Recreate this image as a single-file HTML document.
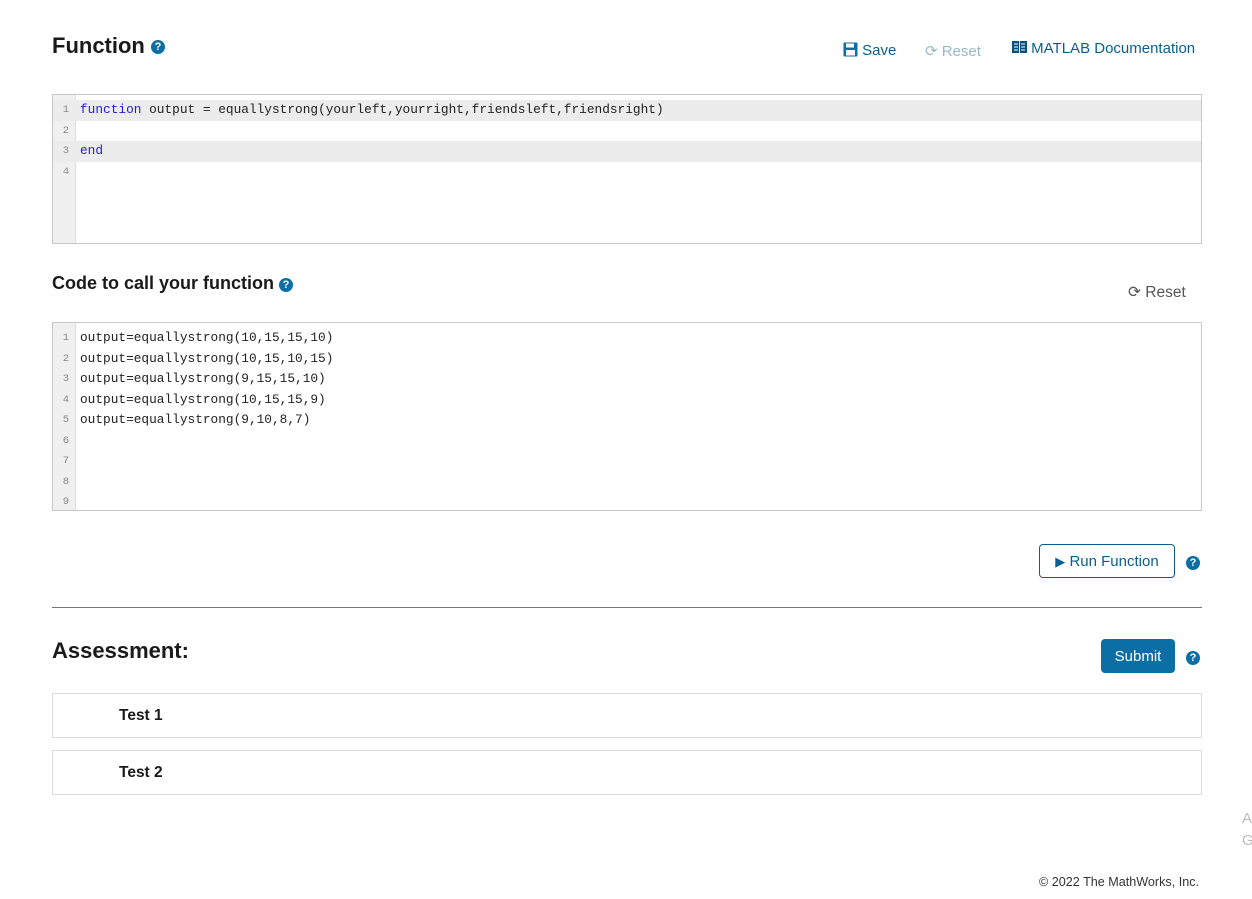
<!DOCTYPE html>
<html><head><style>
body{margin:0;background:#fff;font-family:"Liberation Sans",Arial,sans-serif;color:#1a1a1a;width:1252px;height:899px;position:relative;overflow:hidden}
.a{position:absolute}
.q{display:inline-block;width:14px;height:14px;border-radius:50%;background:#0b6fa5;color:#fff;font-size:11px;font-weight:bold;text-align:center;line-height:14px}
.ed{position:absolute;left:52px;width:1148px;border:1px solid #c8c8c8;background:#fff}
.gut{position:absolute;left:0;top:0;bottom:0;width:22px;background:#f0f0f0;border-right:1px solid #ddd}
.ln{position:absolute;left:0;width:1148px;height:20.5px;font-family:"Liberation Mono",monospace;font-size:12.8px;line-height:20.5px}
.ln .n{position:absolute;left:0;width:16px;text-align:right;color:#888;font-size:10.5px}
.ln .c{position:absolute;left:27px;white-space:pre;color:#222}
.hl{background:#ececec}
.ln .kw,.kw{color:#1f1fd0}
.test{position:absolute;left:52px;width:1148px;height:43px;border:1px solid #dcdcdc;font-weight:bold;font-size:15.5px;line-height:43px}
.test span{position:absolute;left:66px}
</style></head><body>
<div class="a" style="left:52px;top:33px;font-size:22px;font-weight:bold">Function <span class="q" style="vertical-align:3px">?</span></div>
<div class="a" style="left:843px;top:42px;font-size:15px;color:#0b5f8f"><svg width="15" height="15" viewBox="0 0 15 15" style="vertical-align:-2px"><rect x="0.5" y="0.5" width="14" height="14" rx="1" fill="#0b6fa5"/><rect x="3" y="1.5" width="8" height="4" fill="#fff"/><rect x="3" y="8" width="9" height="5.5" fill="#fff"/></svg> Save</div>
<div class="a" style="left:925px;top:42px;font-size:15px;color:#9ab8c8">⟳ Reset</div>
<div class="a" style="left:1012px;top:40px;font-size:15px;color:#0b5f8f"><svg width="15" height="12" viewBox="0 0 15 12" style="vertical-align:0px"><rect x="0" y="0" width="15" height="12" fill="#0b4f7f"/><line x1="7.5" y1="0" x2="7.5" y2="12" stroke="#fff"/><path d="M2 3h4M2 6h4M2 9h4M9 3h4M9 6h4M9 9h4" stroke="#fff"/></svg> MATLAB Documentation</div>

<div class="ed" style="top:94px;height:148px"><div class="gut"></div>
<div class="ln hl" style="top:5px"><span class="n">1</span><span class="c"><span class="kw">function</span> output = equallystrong(yourleft,yourright,friendsleft,friendsright)</span></div>
<div class="ln" style="top:25.5px"><span class="n">2</span></div>
<div class="ln hl" style="top:46px"><span class="n">3</span><span class="c kw">end</span></div>
<div class="ln" style="top:66.5px"><span class="n">4</span></div>
</div>

<div class="a" style="left:52px;top:273px;font-size:18px;font-weight:bold">Code to call your function <span class="q" style="vertical-align:1px">?</span></div>
<div class="a" style="left:1128px;top:283px;font-size:15.5px;color:#555">⟳ Reset</div>

<div class="ed" style="top:322px;height:187px"><div class="gut"></div>
<div class="ln" style="top:5px"><span class="n">1</span><span class="c">output=equallystrong(10,15,15,10)</span></div>
<div class="ln" style="top:25.5px"><span class="n">2</span><span class="c">output=equallystrong(10,15,10,15)</span></div>
<div class="ln" style="top:46px"><span class="n">3</span><span class="c">output=equallystrong(9,15,15,10)</span></div>
<div class="ln" style="top:66.5px"><span class="n">4</span><span class="c">output=equallystrong(10,15,15,9)</span></div>
<div class="ln" style="top:87px"><span class="n">5</span><span class="c">output=equallystrong(9,10,8,7)</span></div>
<div class="ln" style="top:107.5px"><span class="n">6</span></div>
<div class="ln" style="top:128px"><span class="n">7</span></div>
<div class="ln" style="top:148.5px"><span class="n">8</span></div>
<div class="ln" style="top:169px"><span class="n">9</span></div>
</div>

<div class="a" style="left:1039px;top:544px;width:134px;height:32px;border:1px solid #0b5f8f;border-radius:4px;font-size:15px;color:#0b5f8f;line-height:34px;text-align:center"><span style="font-size:13px">▶</span> Run Function</div>
<div class="a" style="left:1186px;top:553px"><span class="q">?</span></div>
<div class="a" style="left:52px;top:607px;width:1150px;height:1px;background:#777"></div>
<div class="a" style="left:52px;top:638px;font-size:22px;font-weight:bold">Assessment:</div>
<div class="a" style="left:1101px;top:639px;width:74px;height:34px;background:#0b6fa5;border-radius:4px;color:#fff;font-size:15px;line-height:36px;text-align:center">Submit</div>
<div class="a" style="left:1186px;top:648px"><span class="q">?</span></div>
<div class="test" style="top:693px"><span>Test 1</span></div>
<div class="test" style="top:750px"><span>Test 2</span></div>
<div class="a" style="left:1242px;top:808px;font-size:15px;color:#bbb;line-height:22px">A<br>G</div>
<div class="a" style="left:1039px;top:875px;font-size:12.6px;color:#333">© 2022 The MathWorks, Inc.</div>
</body></html>
